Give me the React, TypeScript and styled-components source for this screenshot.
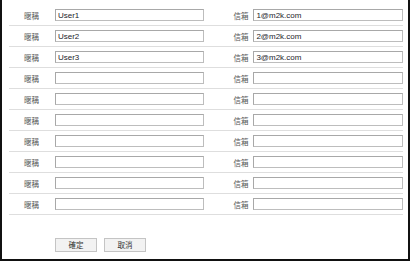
import React from 'react';
import styled, { createGlobalStyle } from 'styled-components';

const GlobalStyle = createGlobalStyle`
	html, body {
		margin: 0;
		padding: 0;
		background: #fff;
	}
	body {
		font-family: 'Liberation Sans', 'Noto Sans CJK TC', sans-serif;
	}
`;

const users = [
	{ nick: 'User1', mail: '1@m2k.com' },
	{ nick: 'User2', mail: '2@m2k.com' },
	{ nick: 'User3', mail: '3@m2k.com' },
	{ nick: '', mail: '' },
	{ nick: '', mail: '' },
	{ nick: '', mail: '' },
	{ nick: '', mail: '' },
	{ nick: '', mail: '' },
	{ nick: '', mail: '' },
	{ nick: '', mail: '' },
];

const App = () => {
	return (
		<>
			<GlobalStyle />
			<Frame>
				<Table>
					{users.map((u, i) => (
						<Row key={i}>
							<Label $width={46} $indent={15}>
								暱稱
							</Label>
							<Field readOnly value={u.nick} />
							<Label $width={49} $indent={29}>
								信箱
							</Label>
							<Field readOnly value={u.mail} />
						</Row>
					))}
				</Table>
				<Actions>
					<Button type="button">確定</Button>
					<Button type="button">取消</Button>
				</Actions>
			</Frame>
		</>
	);
};

const Frame = styled.div`
	box-sizing: border-box;
	width: 410px;
	height: 261px;
	border: 2px solid #111;
	border-top: none;
	border-bottom-width: 2px;
	padding: 5px 0 0 7px;
	display: flex;
	flex-direction: column;
`;

const Table = styled.div`
	display: flex;
	flex-direction: column;
	width: 394px;
`;

const Row = styled.div`
	display: flex;
	align-items: center;
	height: 20px;
	border-bottom: 1px solid #dedede;
`;

const Label = styled.span<{ $width: number; $indent: number }>`
	box-sizing: border-box;
	width: ${(p) => p.$width}px;
	padding-left: ${(p) => p.$indent}px;
	font-family: 'Noto Sans CJK TC', sans-serif;
	font-size: 7.5px;
	color: #555;
	white-space: nowrap;
`;

const Field = styled.input`
	box-sizing: border-box;
	width: 150px;
	height: 12px;
	margin: 0;
	padding: 0 2px;
	border: 1px solid #bdbdbd;
	border-top-color: #a8a8a8;
	border-left-color: #a8a8a8;
	border-radius: 0;
	background: #fff;
	font-family: 'Liberation Sans', sans-serif;
	font-size: 8px;
	color: #1c1c2a;
	outline: none;
`;

const Actions = styled.div`
	display: flex;
	gap: 7px;
	margin-top: 23px;
	padding-left: 46px;
`;

const Button = styled.button`
	box-sizing: border-box;
	width: 42px;
	height: 14px;
	margin: 0;
	padding: 0;
	border: 1px solid #c4c4c4;
	border-radius: 0;
	background: #f2f2f2;
	font-family: 'Noto Sans CJK TC', sans-serif;
	font-size: 7.5px;
	line-height: 12px;
	color: #333;
`;

export default App;
